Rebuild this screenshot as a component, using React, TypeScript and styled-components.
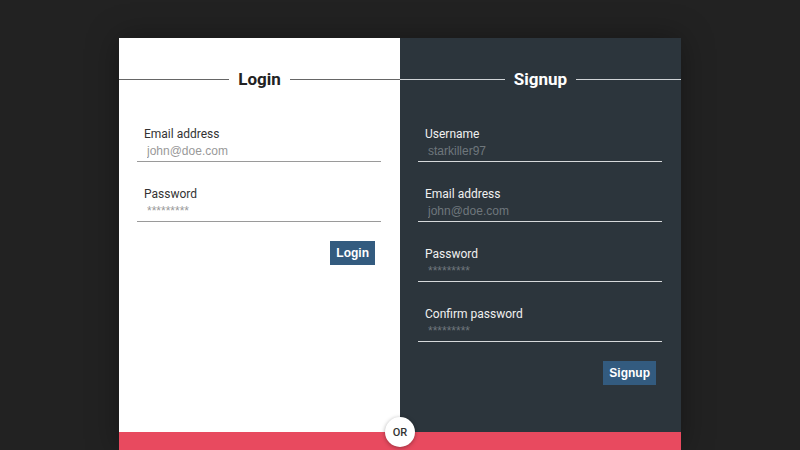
import * as React from "react";
import styled, { createGlobalStyle } from "styled-components";

const GlobalStyle = createGlobalStyle`
  html, body {
    margin: 0;
    padding: 0;
    background: #222222;
    overflow: hidden;
    font-family: Roboto, "Liberation Sans", sans-serif;
  }
`;

const Page = styled.div`
  width: 800px;
  height: 450px;
  display: flex;
  justify-content: center;
  padding-top: 38px;
  box-sizing: border-box;
`;

const Card = styled.div`
  position: relative;
  width: 562px;
  box-shadow: 0 0 30px rgba(0, 0, 0, 0.35);
`;

const Panels = styled.div`
  display: grid;
  grid-template-columns: 1fr 1fr;
  height: 394px;
`;

const Panel = styled.section<{ $dark?: boolean }>`
  background: ${(p) => (p.$dark ? "#2c353c" : "#ffffff")};
  color: ${(p) => (p.$dark ? "#f0f0f0" : "#333333")};
  padding: 31px 19px 0 18px;
  display: flex;
  flex-direction: column;
`;

const Heading = styled.h2<{ $dark?: boolean }>`
  display: flex;
  align-items: center;
  gap: 9px;
  margin: 0 -19px 0 -18px;
  font-size: 17px;
  line-height: 20px;
  font-weight: 700;
  color: ${(p) => (p.$dark ? "#ffffff" : "#222222")};

  &::before,
  &::after {
    content: "";
    flex: 1;
    height: 1px;
    background: ${(p) => (p.$dark ? "#d0d4d7" : "#666666")};
  }
`;

const Form = styled.form`
  margin-top: 38px;
  display: flex;
  flex-direction: column;
  gap: 25px;
`;

const Field = styled.label`
  display: flex;
  flex-direction: column;
`;

const Label = styled.span`
  font-size: 12px;
  line-height: 14px;
  padding-left: 7px;
`;

const Input = styled.input<{ $dark?: boolean }>`
  height: 21px;
  box-sizing: border-box;
  border: none;
  border-bottom: 1px solid ${(p) => (p.$dark ? "#d6d9db" : "#9a9a9a")};
  background: transparent;
  padding: 0 9px 1px 10px;
  font-family: "Liberation Sans", Arial, sans-serif;
  font-size: 12px;
  outline: none;
  color: inherit;

  &::placeholder {
    color: ${(p) => (p.$dark ? "#6f777c" : "#999999")};
  }
`;

const Actions = styled.div`
  display: flex;
  justify-content: flex-end;
  margin-top: -6px;
  padding-right: 6px;
`;

const Button = styled.button`
  height: 24px;
  padding: 0 6px;
  border: none;
  background: #335b7f;
  color: #ffffff;
  font-family: "Liberation Sans", Arial, sans-serif;
  font-size: 12px;
  font-weight: 700;
`;

const Footer = styled.div`
  height: 40px;
  background: #e84a5f;
`;

const OrBadge = styled.div`
  position: absolute;
  left: 50%;
  top: 394px;
  width: 30px;
  height: 30px;
  margin: -15px 0 0 -15px;
  border-radius: 50%;
  background: #ffffff;
  box-shadow: 0 1px 4px rgba(0, 0, 0, 0.35);
  display: flex;
  align-items: center;
  justify-content: center;
  font-size: 11px;
  font-weight: 500;
  color: #333333;
`;

type FieldDef = { label: string; placeholder: string; type?: string };

const loginFields: FieldDef[] = [
  { label: "Email address", placeholder: "john@doe.com", type: "email" },
  { label: "Password", placeholder: "*********" },
];

const signupFields: FieldDef[] = [
  { label: "Username", placeholder: "starkiller97" },
  { label: "Email address", placeholder: "john@doe.com", type: "email" },
  { label: "Password", placeholder: "*********" },
  { label: "Confirm password", placeholder: "*********" },
];

const AuthForm = ({
  title,
  fields,
  dark,
}: {
  title: string;
  fields: FieldDef[];
  dark?: boolean;
}) => (
  <Panel $dark={dark}>
    <Heading $dark={dark}>{title}</Heading>
    <Form onSubmit={(e) => e.preventDefault()}>
      {fields.map((f) => (
        <Field key={f.label}>
          <Label>{f.label}</Label>
          <Input $dark={dark} type={f.type ?? "text"} placeholder={f.placeholder} />
        </Field>
      ))}
      <Actions>
        <Button type="submit">{title}</Button>
      </Actions>
    </Form>
  </Panel>
);

const App = () => (
  <Page>
    <GlobalStyle />
    <Card>
      <Panels>
        <AuthForm title="Login" fields={loginFields} />
        <AuthForm title="Signup" fields={signupFields} dark />
      </Panels>
      <Footer />
      <OrBadge>OR</OrBadge>
    </Card>
  </Page>
);

export default App;
